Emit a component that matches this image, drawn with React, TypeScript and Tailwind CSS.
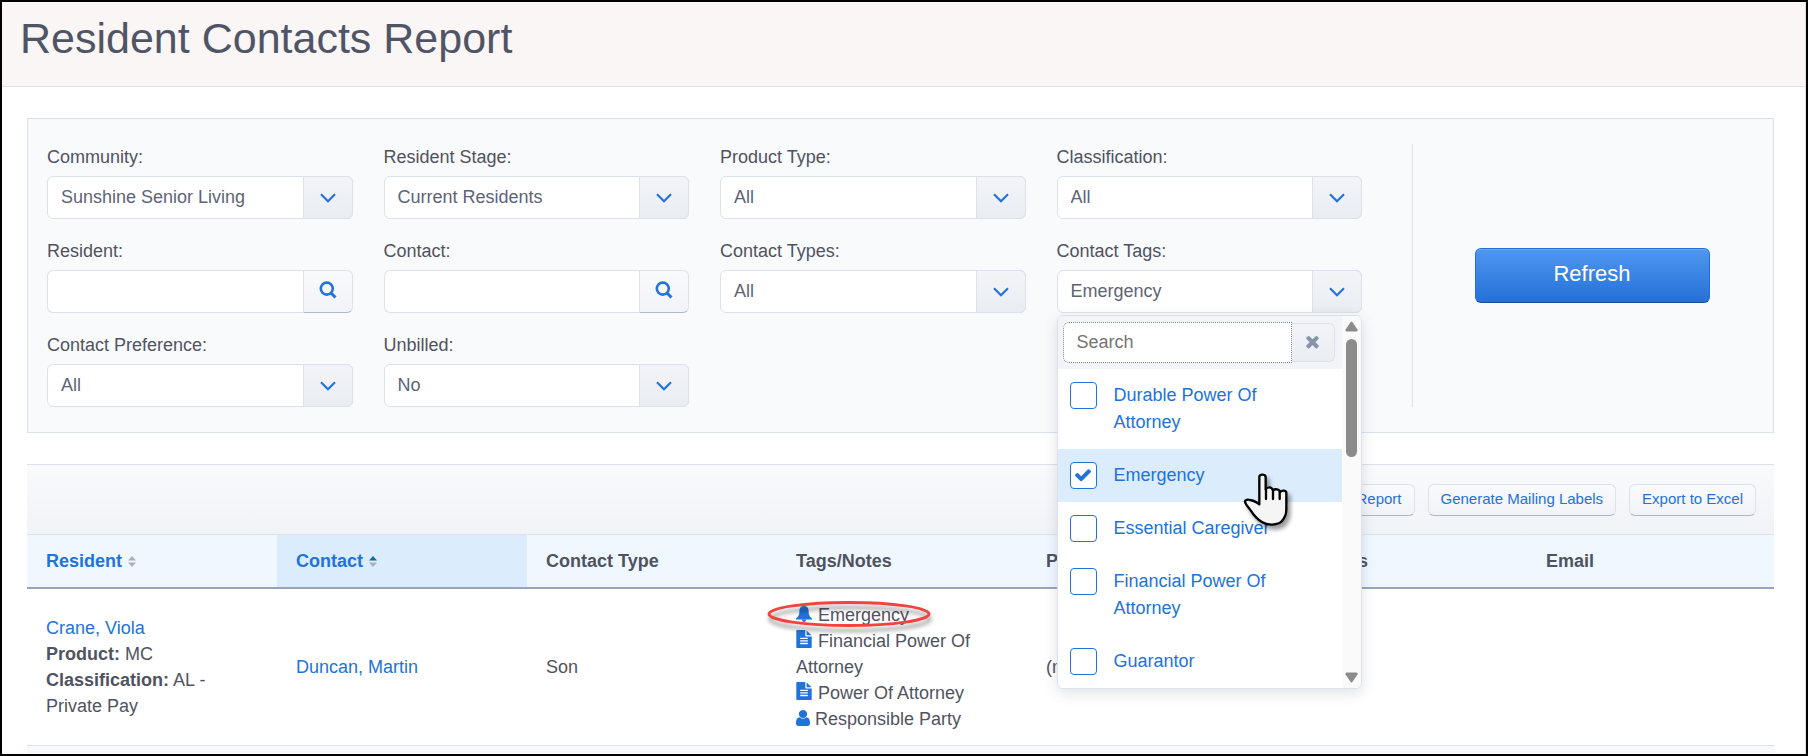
import React, { useState } from "react";

const CHECK =
  "M1671 566q0 40-28 68l-724 724-136 136q-28 28-68 28t-68-28l-136-136-362-362q-28-28-28-68t28-68l136-136q28-28 68-28t68 28l294 295 656-657q28-28 68-28t68 28l136 136q28 28 28 68z";
const TIMES =
  "M1490 1322q0 40-28 68l-136 136q-28 28-68 28t-68-28l-294-294-294 294q-28 28-68 28t-68-28l-136-136q-28-28-28-68t28-68l294-294-294-294q-28-28-28-68t28-68l136-136q28-28 68-28t68 28l294 294 294-294q28-28 68-28t68 28l136 136q28 28 28 68t-28 68l-294 294 294 294q28 28 28 68z";
const FILE_TEXT =
  "M1596 476q14 14 28 36h-472v-472q22 14 36 28zm-476 164h544v1056q0 40-28 68t-68 28h-1344q-40 0-68-28t-28-68v-1600q0-40 28-68t68-28h800v544q0 40 28 68t68 28zm160 736v-64q0-14-9-23t-23-9h-704q-14 0-23 9t-9 23v64q0 14 9 23t23 9h704q14 0 23-9t9-23zm0-256v-64q0-14-9-23t-23-9h-704q-14 0-23 9t-9 23v64q0 14 9 23t23 9h704q14 0 23-9t9-23zm0-256v-64q0-14-9-23t-23-9h-704q-14 0-23 9t-9 23v64q0 14 9 23t23 9h704q14 0 23-9t9-23z";
const USER =
  "M1536 1399q0 109-62.5 187t-150.500 78h-854q-88 0-150.500-78t-62.500-187q0-85 8.500-160.500t31.500-152 58.500-131 94-89 134.500-34.500q131 128 313 128t313-128q76 0 134.500 34.500t94 89 58.500 131 31.500 152 8.500 160.500zm-256-887q0 159-112.500 271.500t-271.500 112.500-271.500-112.500-112.500-271.500 112.500-271.500 271.500-112.500 271.500 112.500 112.500 271.500z";

function Chevron() {
  return (
    <svg className="h-[10px] w-4" viewBox="0 0 16 10" fill="none" stroke="#2173db" strokeWidth="2.200" aria-hidden="true">
      <path d="M1 1.200 8 8.200 15 1.200" />
    </svg>
  );
}

function ChevronBox() {
  return (
    <span className="pointer-events-none col-start-1 row-start-1 flex w-[50px] items-center justify-center justify-self-end rounded-r-md border border-[#dde1ea] bg-linear-to-b from-[#f3f4f8] to-[#e9edf2]">
      <Chevron />
    </span>
  );
}

function Field({ id, label, children }: { id: string; label: string; children: React.ReactNode }) {
  return (
    <div className="flex min-w-0 flex-col gap-[6px]">
      <label htmlFor={id} className="leading-[26px]">
        {label}
      </label>
      {children}
    </div>
  );
}

function SelectField({ id, label, value }: { id: string; label: string; value: string }) {
  return (
    <Field id={id} label={label}>
      <div className="grid h-[43px]">
        <select
          id={id}
          defaultValue={value}
          className="col-start-1 row-start-1 w-full appearance-none rounded-md border border-[#dde1ea] bg-white pr-14 pl-[13px] text-[#5e6377]"
        >
          <option>{value}</option>
        </select>
        <ChevronBox />
      </div>
    </Field>
  );
}

function SearchField({ id, label }: { id: string; label: string }) {
  return (
    <Field id={id} label={label}>
      <div className="flex h-[43px]">
        <input id={id} type="text" className="min-w-0 flex-1 rounded-l-md border border-r-0 border-[#dde1ea] bg-white px-3" />
        <button
          type="button"
          aria-label={label + " search"}
          className="flex w-[50px] items-center justify-center rounded-r-md border border-[#dde1ea] border-b-[#afb8c9] bg-linear-to-b from-[#f9fafc] to-[#f2f3f7] pb-1"
        >
          <svg className="size-[18px]" viewBox="0 0 18 18" fill="none" stroke="#2173db" aria-hidden="true">
            <circle cx="7.800" cy="7.600" r="6" strokeWidth="2.600" />
            <path d="m12 12 4.500 4.500" strokeWidth="3" />
          </svg>
        </button>
      </div>
    </Field>
  );
}

const TAGS = ["Durable Power Of Attorney", "Emergency", "Essential Caregiver", "Financial Power Of Attorney", "Guarantor"];

function TagMenu() {
  const [picked, setPicked] = useState<string[]>(["Emergency"]);
  const toggle = (tag: string) =>
    setPicked((now) => (now.includes(tag) ? now.filter((t) => t !== tag) : [...now, tag]));
  return (
    <div className="absolute top-full right-0 left-0 z-10 mt-[2px] flex overflow-hidden rounded-md border border-[#dde1ea] bg-white shadow-[0_4px_14px_rgba(60,70,90,0.16)]">
      <div className="min-w-0 flex-1">
        <div className="flex bg-[#f3f4f8] py-[6px] pr-[7px] pl-[5px]">
          <input
            type="text"
            aria-label="Search tags"
            placeholder="Search"
            className="h-[41px] min-w-0 flex-1 rounded-l-md border border-dotted border-[#7c889f] bg-white pl-[13px] placeholder:text-[#757575]"
          />
          <button
            type="button"
            aria-label="Clear search"
            className="my-px flex w-[43px] items-center justify-center rounded-r-md border border-l-0 border-[#dde1ea] bg-linear-to-b from-[#f3f4f8] to-[#e9edf2] pr-[2px] pb-[2px]"
          >
            <svg className="size-[19px]" viewBox="0 0 1792 1792" fill="#8793ab" aria-hidden="true">
              <path d={TIMES} />
            </svg>
          </button>
        </div>
        <ul>
          {TAGS.map((tag) => {
            const on = picked.includes(tag);
            return (
              <li key={tag} className={on ? "bg-[#dbecfc]" : ""}>
                <label className="flex items-start gap-[17px] py-[13px] pr-14 pl-3 leading-[27px] text-[#2173db]">
                  <span className="grid size-[27px] shrink-0 place-items-center">
                    <input
                      type="checkbox"
                      checked={on}
                      onChange={() => toggle(tag)}
                      className="col-start-1 row-start-1 size-[27px] appearance-none rounded-[4px] border border-[#2173db] bg-white"
                    />
                    {on && (
                      <svg
                        className="pointer-events-none col-start-1 row-start-1 h-[13px] w-4"
                        viewBox="120 330 1552 1240"
                        fill="#2173db"
                        aria-hidden="true"
                      >
                        <path d={CHECK} />
                      </svg>
                    )}
                  </span>
                  <span>{tag}</span>
                </label>
              </li>
            );
          })}
        </ul>
      </div>
      <div className="flex w-[19px] flex-col items-center bg-[#fafafa] py-[5px]" aria-hidden="true">
        <svg className="h-[11px] w-[13px]" viewBox="0 0 13 11" fill="#8b8b8b">
          <path d="M5.500 1.200Q6.500 0 7.500 1.200L12.500 8.500Q13 10.500 11.500 10.500H1.500Q0 10.500.5 8.500Z" />
        </svg>
        <div className="mt-[7px] h-[118px] w-[11px] rounded-full bg-[#8b8b8b]" />
        <svg className="mt-auto h-[11px] w-[13px]" viewBox="0 0 13 11" fill="#8b8b8b">
          <path d="M5.500 9.800Q6.500 11 7.500 9.800L12.500 2.500Q13 .5 11.500.5H1.500Q0 .5.5 2.500Z" />
        </svg>
      </div>
      <svg
        className="pointer-events-none absolute top-[150px] left-[181px] h-[70px] w-[60px] drop-shadow-[3px_4px_2px_rgba(0,0,0,0.4)]"
        viewBox="57 48 180 210"
        fill="#f5f5f5"
        stroke="#000"
        strokeWidth="7"
        strokeLinejoin="round"
        strokeLinecap="round"
        aria-hidden="true"
      >
        <path d="M118 81Q118 74 127 74T137 81V118Q140 112 148 112T159 121Q163 117 171 118T180 127Q184 121 192 122T199 131V178C199 196 193 206 185 214C174 226 142 227 127 217C112 208 100 194 92 181C86 172 76 164 75 155C74 149 84 148 90 150C99 152 110 155 118 163Z" />
        <path d="M138 116V147M159 121V147M179 127V147" fill="none" />
      </svg>
    </div>
  );
}

function SortArrows({ up }: { up?: boolean }) {
  return (
    <svg className="h-[11px] w-2" viewBox="0 0 8 11" aria-hidden="true">
      <path d="M4 0 8 4.500H0Z" fill={up ? "#0f6f9c" : "#adb0b5"} />
      <path d="M4 11 0 6.500H8Z" fill="#adb0b5" />
    </svg>
  );
}

function FileIcon() {
  return (
    <svg className="mr-[6px] inline-block h-[18px] w-4 align-[-1px]" viewBox="128 0 1536 1792" fill="#2173db" aria-hidden="true">
      <path d={FILE_TEXT} />
    </svg>
  );
}

const TOOL =
  "h-8 rounded-md border border-[#dde1ea] border-b-[#afb8c9] bg-linear-to-b from-[#f9fafc] to-[#f2f3f7] px-3 text-[15px] text-[#2173db]";
const TH = "w-[250px] px-[19px] text-left font-bold";
const TD = "px-[19px] pt-[13px] pb-[13px]";

export default function App() {
  return (
    <div className="min-h-screen border-2 border-black bg-white font-['Liberation_Sans',Arial,sans-serif] text-[18px] text-[#50535f]">
      <div className="border-r border-[#dde1ea]">
        <header className="h-[85px] border-b border-[#dde1ea] bg-[#faf6f5] pt-3 pl-[18px]">
          <h1 className="text-[43px] leading-[48px] text-[#4f5566]">Resident Contacts Report</h1>
        </header>
        <main className="pt-[31px] pr-[31px] pl-[25px]">
          <form
            className="flex border border-[#dde1ea] bg-[#f9fafc] pt-[25px] pb-[25px] pl-[19px]"
            onSubmit={(e) => e.preventDefault()}
          >
            <div className="mr-[50px] grid min-w-0 flex-1 grid-cols-4 gap-x-[31px] gap-y-[19px]">
              <SelectField id="community" label="Community:" value="Sunshine Senior Living" />
              <SelectField id="stage" label="Resident Stage:" value="Current Residents" />
              <SelectField id="product" label="Product Type:" value="All" />
              <SelectField id="classification" label="Classification:" value="All" />
              <SearchField id="resident" label="Resident:" />
              <SearchField id="contact" label="Contact:" />
              <SelectField id="types" label="Contact Types:" value="All" />
              <Field id="tags" label="Contact Tags:">
                <div className="relative grid h-[43px]">
                  <button
                    id="tags"
                    type="button"
                    aria-expanded="true"
                    className="col-start-1 row-start-1 rounded-md border border-[#dde1ea] bg-white pl-[13px] text-left text-[#5e6377]"
                  >
                    Emergency
                  </button>
                  <ChevronBox />
                  <TagMenu />
                </div>
              </Field>
              <SelectField id="preference" label="Contact Preference:" value="All" />
              <SelectField id="unbilled" label="Unbilled:" value="No" />
            </div>
            <div className="flex w-[361px] shrink-0 items-center justify-center border-l border-[#dde1ea] pr-[2px]">
              <button
                type="submit"
                className="h-[55px] w-[235px] rounded-md border border-[#2170d6] border-b-[#1a4f99] bg-linear-to-b from-[#4f97f0] to-[#2470d8] pb-1 text-[22px] text-white shadow-[inset_0_1px_0_#6ba8f5]"
              >
                Refresh
              </button>
            </div>
          </form>

          <section className="mt-[31px]">
            <div className="flex h-[71px] items-center justify-end gap-[13px] border-y border-[#dde1ea] bg-linear-to-b from-[#f9fafc] to-[#f2f3f7] pr-[18px]">
              <button type="button" className={TOOL}>
                Print Report
              </button>
              <button type="button" className={TOOL}>
                Generate Mailing Labels
              </button>
              <button type="button" className={TOOL}>
                Export to Excel
              </button>
            </div>
            <table className="w-full table-fixed border-collapse">
              <thead>
                <tr className="h-[53px] border-b-2 border-[#98a4b9] bg-[#eff7ff]">
                  <th className={TH}>
                    <a href="#resident" className="flex items-center gap-[6px] text-[#2173db]">
                      Resident <SortArrows />
                    </a>
                  </th>
                  <th className="w-[250px] bg-[#dbecfc] px-[19px] text-left font-bold">
                    <a href="#contact" className="flex items-center gap-[6px] text-[#2173db]">
                      Contact <SortArrows up />
                    </a>
                  </th>
                  <th className={TH}>Contact Type</th>
                  <th className={TH}>Tags/Notes</th>
                  <th className={TH}>Phone</th>
                  <th className={TH}>Address</th>
                  <th className="px-[19px] text-left font-bold">Email</th>
                </tr>
              </thead>
              <tbody className="leading-[26px]">
                <tr className="border-b border-[#dde1ea]">
                  <td className={TD}>
                    <a href="#crane" className="text-[#2173db]">
                      Crane, Viola
                    </a>
                    <br />
                    <b>Product:</b> MC
                    <br />
                    <b>Classification:</b> AL -
                    <br />
                    Private Pay
                  </td>
                  <td className={TD}>
                    <a href="#duncan" className="text-[#2173db]">
                      Duncan, Martin
                    </a>
                  </td>
                  <td className={TD}>Son</td>
                  <td className={TD}>
                    <div className="relative">
                      <svg
                        className="mr-[6px] inline-block h-4 w-4 align-[-1px]"
                        viewBox="0 0 16 16"
                        fill="#2173db"
                        aria-hidden="true"
                      >
                        <path d="M8 0C4.600 0 3.400 2.300 3.400 5C3.400 8.600 2.500 10.600 0 12.600V13.500H16V12.600C13.500 10.600 12.600 8.600 12.600 5C12.600 2.300 11.400 0 8 0Z" />
                        <path d="M5.800 13.500H10.200Q9.800 16 8 16T5.800 13.500Z" />
                      </svg>
                      Emergency
                      <svg
                        className="pointer-events-none absolute -top-1 -left-[29px] h-9 w-[166px] drop-shadow-[1px_5px_2px_rgba(0,0,0,0.4)]"
                        viewBox="0 0 166 36"
                        fill="none"
                        stroke="#f4433f"
                        strokeWidth="3"
                        aria-hidden="true"
                      >
                        <ellipse cx="82" cy="16" rx="80" ry="11.500" />
                      </svg>
                    </div>
                    <div>
                      <FileIcon />
                      Financial Power Of Attorney
                    </div>
                    <div>
                      <FileIcon />
                      Power Of Attorney
                    </div>
                    <div>
                      <svg
                        className="mr-[5px] inline-block h-4 w-[14px] align-[-1px]"
                        viewBox="256 128 1280 1536"
                        fill="#2173db"
                        preserveAspectRatio="none"
                        aria-hidden="true"
                      >
                        <path d={USER} />
                      </svg>
                      Responsible Party
                    </div>
                  </td>
                  <td className={TD}>(mobile)</td>
                  <td />
                  <td />
                </tr>
                <tr className="h-2 bg-[#f8f9fc]">
                  <td colSpan={7} />
                </tr>
              </tbody>
            </table>
          </section>
        </main>
      </div>
    </div>
  );
}
